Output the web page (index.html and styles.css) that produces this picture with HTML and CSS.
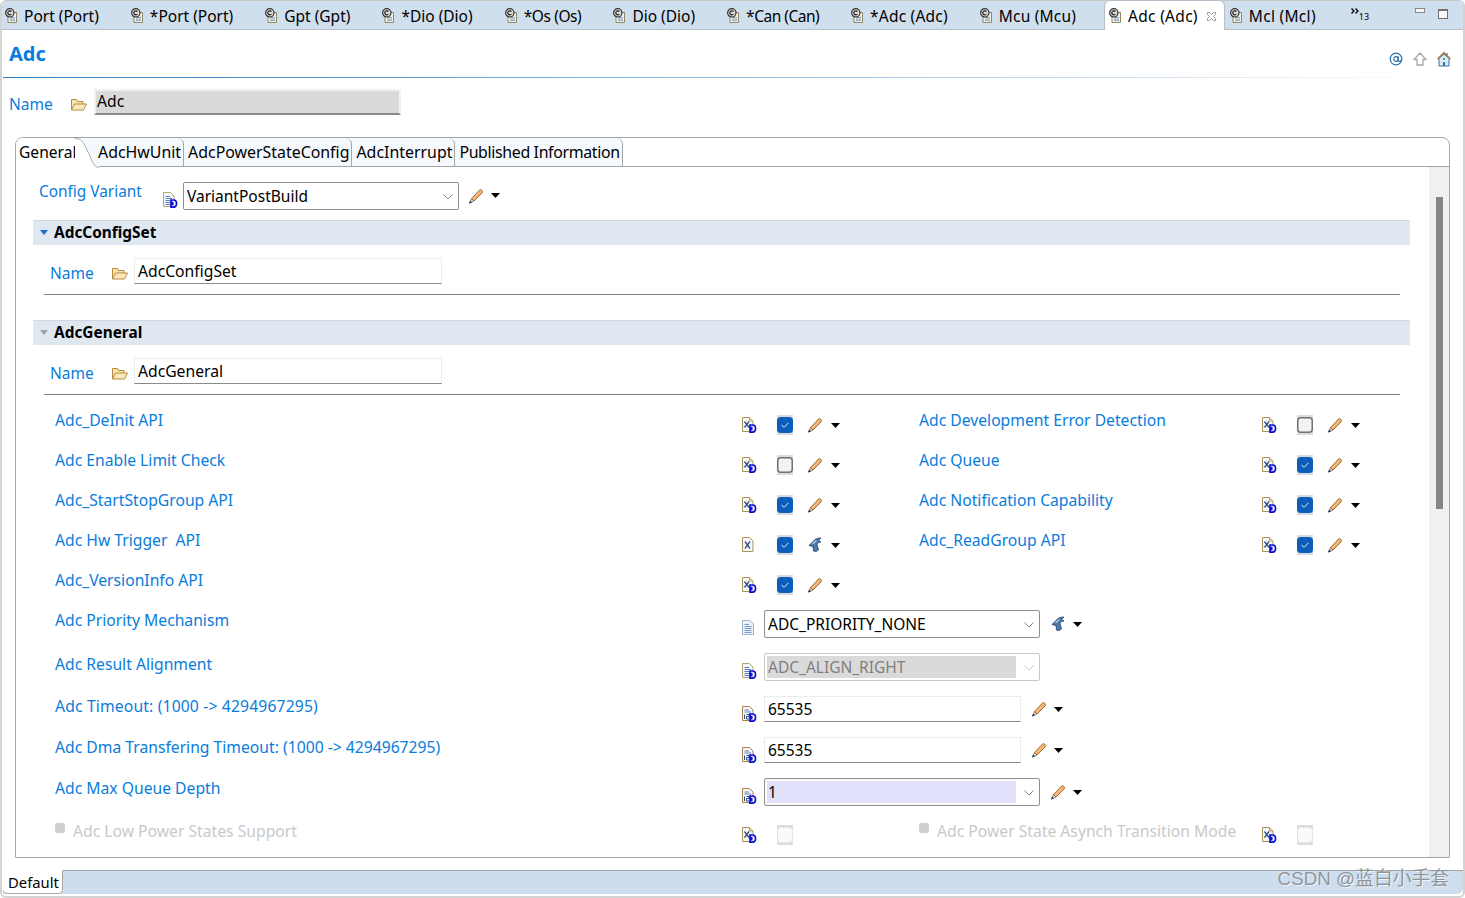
FILE: index.html
```html
<!DOCTYPE html>
<html lang="en">
<head>
<meta charset="utf-8">
<title>Adc</title>
<link rel="stylesheet" href="styles.css">
</head>
<body>
<svg class="defs" width="0" height="0" aria-hidden="true">
  <defs>
    <symbol id="i-editor" viewBox="0 0 16 16">
      <path d="M4 4.5H12.5V14.5H4Z" fill="#f3f1e4" stroke="#8d8766"/>
      <path d="M6 9.5H11M6 11H11M6 12.5H11" stroke="#8ea6c8"/>
      <circle cx="5.8" cy="4.8" r="4.2" fill="#dcdcdc" stroke="#333" stroke-width="1.2"/>
      <path d="M7.4 3.6A2 2 0 1 0 7.4 6" fill="none" stroke="#222" stroke-width="1.2"/>
    </symbol>
    <symbol id="i-folder" viewBox="0 0 16 16">
      <path d="M.5 14V3.500H5.500L6.500 5.500H12V8" fill="#f7e3b0" stroke="#b98a3e"/>
      <path d="M.5 14L3.500 8H15.500L12.500 14Z" fill="#fbe9bd" stroke="#b98a3e"/>
    </symbol>
    <symbol id="i-xd" viewBox="0 0 16 16">
      <path d="M1.5 .5H8.5L12 4V14.5H1.5Z" fill="#f6f6fa" stroke="#a8935c"/>
      <path d="M8.5 .5V4H12" fill="#f3e2b6" stroke="#c29a45"/>
      <path d="M3.5 4.5L8 10.5M8 4.5L3.5 10.5" stroke="#2f4f86" stroke-width="1.3"/>
      <path d="M9 8H11.500C15.500 8 15.500 15.200 11.500 15.200H9ZM10.700 9.800V13.500" fill="#fff" stroke="#0b0bd6" stroke-width="1.7"/>
    </symbol>
    <symbol id="i-x" viewBox="0 0 16 16">
      <path d="M1.5 .5H8.5L12 4V14.5H1.5Z" fill="#f6f6fa" stroke="#a8935c"/>
      <path d="M4 4.5L9 11.5M9 4.5L4 11.5" stroke="#2f4f86" stroke-width="1.3"/>
    </symbol>
    <symbol id="i-d" viewBox="0 0 16 16">
      <path d="M1.5 .5H8.5L12 4V14.5H1.5Z" fill="#f3f6fc" stroke="#b3a571"/>
      <path d="M3.5 4.5H8M3.5 6.5H10M3.5 8.5H8M3.5 10.5H8M3.5 12.5H8" stroke="#5e7fc0"/>
      <path d="M9 8H11.500C15.500 8 15.500 15.200 11.500 15.200H9ZM10.700 9.800V13.500" fill="#fff" stroke="#0b0bd6" stroke-width="1.7"/>
    </symbol>
    <symbol id="i-plain" viewBox="0 0 16 16">
      <path d="M1.5 .5H9L12.5 4V14.5H1.5Z" fill="#edf2fa" stroke="#9fb2d2"/>
      <path d="M3.5 4.5H8M3.5 6.5H10.5M3.5 8.5H10.5M3.5 10.5H10.5M3.5 12.5H10.5" stroke="#7f9ac8"/>
    </symbol>
    <symbol id="i-nd" viewBox="0 0 16 16">
      <path d="M1.5 .5H8.5L12 4V14.5H1.5Z" fill="#f6f6fa" stroke="#a8824a"/>
      <path d="M3.5 4H8M3.5 6H10" stroke="#5e7fc0"/>
      <path d="M3.5 8.5V13M5.5 8.5H8V10.5H5.5V13H8" fill="none" stroke="#2f4f86"/>
      <path d="M9 8H11.500C15.500 8 15.500 15.200 11.500 15.200H9ZM10.700 9.800V13.500" fill="#fff" stroke="#0b0bd6" stroke-width="1.7"/>
    </symbol>
    <symbol id="i-pencil" viewBox="0 0 16 16">
      <path d="M3.500 10.500L11.500 2Q12.500 1 14 2.500Q15 4 14 5L6 13Z" fill="#f0b67c" stroke="#a86f30"/>
      <path d="M3.500 10.500L6 13L1.500 15Z" fill="#efdcb8" stroke="#6d5733" stroke-width=".7"/>
      <path d="M1 15.500L2 12.800L4 14.500Z" fill="#12307f"/>
    </symbol>
    <symbol id="i-wand" viewBox="0 0 16 16">
      <path d="M14 1C10 1 8 2 6.500 4L2 8.500L6 9.500L6.500 14C9 15 11 14 11.500 12.500L10 8C10 6 12 5 14 5L11.500 3.500Z" fill="#4d78a8" stroke="#1f3f68" stroke-width=".8"/>
      <path d="M5.500 7L9.500 3.500" stroke="#bcd4ee" stroke-width="1.200"/>
    </symbol>
    <symbol id="i-arrow" viewBox="0 0 9 5">
      <path d="M0 0H9L4.500 5Z" fill="#000"/>
    </symbol>
    <symbol id="i-chev" viewBox="0 0 10 6">
      <path d="M.5 .5L5 5L9.500 .5" fill="none" stroke="currentColor"/>
    </symbol>
    <symbol id="i-doc-check" viewBox="0 0 16 20">
      <rect width="16" height="20" fill="#dcdcdc"/>
      <rect y="2" width="16" height="16" rx="3.500" fill="#0b5fbb"/>
      <path d="M4.500 10L7 12.500L11.500 7.800" fill="none" stroke="#d8e6f6" stroke-width="1"/>
    </symbol>
    <symbol id="i-doc-off" viewBox="0 0 16 20">
      <rect width="16" height="20" fill="#dcdcdc"/>
      <rect x=".75" y="2.750" width="14.500" height="14.500" rx="3" fill="#f3f3f3" stroke="#707070" stroke-width="1.500"/>
    </symbol>
    <symbol id="i-doc-dis" viewBox="0 0 16 20">
      <rect width="16" height="20" fill="#dcdcdc"/>
      <rect x=".5" y="2.500" width="15" height="15" rx="3" fill="#fafafa" stroke="#e4e4e4"/>
    </symbol>
  </defs>
</svg>

<div class="app">
  <nav class="tabbar">
    <div class="tab"><svg class="ic"><use href="#i-editor"/></svg><span>Port (Port)</span></div>
    <div class="tab"><svg class="ic"><use href="#i-editor"/></svg><span>*Port (Port)</span></div>
    <div class="tab"><svg class="ic"><use href="#i-editor"/></svg><span>Gpt (Gpt)</span></div>
    <div class="tab"><svg class="ic"><use href="#i-editor"/></svg><span>*Dio (Dio)</span></div>
    <div class="tab"><svg class="ic"><use href="#i-editor"/></svg><span class="tight-os">*Os (Os)</span></div>
    <div class="tab"><svg class="ic"><use href="#i-editor"/></svg><span>Dio (Dio)</span></div>
    <div class="tab"><svg class="ic"><use href="#i-editor"/></svg><span class="tight-can">*Can (Can)</span></div>
    <div class="tab"><svg class="ic"><use href="#i-editor"/></svg><span class="wide-adc">*Adc (Adc)</span></div>
    <div class="tab tab-before-active"><svg class="ic"><use href="#i-editor"/></svg><span class="wide-adc">Mcu (Mcu)</span></div>
    <div class="tab tab-active"><svg class="ic"><use href="#i-editor"/></svg><span class="wider">Adc (Adc)</span>
      <svg class="close" viewBox="0 0 11 11"><path d="M1.500 1.500H3.500L5.500 3.500L7.500 1.500H9.500V3.500L7.500 5.500L9.500 7.500V9.500H7.500L5.500 7.500L3.500 9.500H1.500V7.500L3.500 5.500L1.500 3.500Z" fill="#fff" stroke="#9a9a9a"/></svg>
    </div>
    <div class="tab tab-last"><svg class="ic"><use href="#i-editor"/></svg><span class="wider">Mcl (Mcl)</span></div>
    <div class="more"><svg class="more-ic" viewBox="0 0 9 6"><path d="M.5 .5L3 3L.5 5.500M4.500 .5L7 3L4.500 5.500" fill="none" stroke="#000" stroke-width="1.300"/></svg><span class="more-n">13</span></div>
    <div class="winbtns">
      <span class="btn-min"></span>
      <span class="btn-max"></span>
    </div>
  </nav>

  <header class="head">
    <h1 class="title">Adc</h1>
    <div class="head-tools">
      <svg class="tool" viewBox="0 0 14 16"><circle cx="7" cy="8" r="5.800" fill="none" stroke="#2a70aa" stroke-width="1.200"/><circle cx="7" cy="8" r="2.300" fill="none" stroke="#2a70aa" stroke-width="1.200"/><path d="M9.300 5.500V9.500C9.300 11 12 11 12.800 8.500" fill="none" stroke="#2a70aa" stroke-width="1.200"/></svg>
      <svg class="tool tool-up" viewBox="0 0 14 16"><path d="M7 2L13 8.500H10V14H4V8.500H1Z" fill="#fff" stroke="#a8a8a8" stroke-width="1.300"/></svg>
      <svg class="tool tool-home" viewBox="0 0 14 16"><path d="M.5 8L7 1.500L13.500 8" fill="none" stroke="#b5803e" stroke-width="1.400"/><path d="M10 2V5" stroke="#b5803e" stroke-width="1.500"/><path d="M2 7.500L7 3L12 7.500V15H2Z" fill="#dcebf8" stroke="#3f6ea6"/><rect x="6" y="7" width="2" height="2" fill="#58a24a"/><rect x="6" y="11" width="2" height="4" fill="#2f6fb0"/></svg>
    </div>
  </header>

  <div class="namebar">
    <span class="link name-label">Name</span>
    <svg class="ic folder"><use href="#i-folder"/></svg>
    <div class="text-field text-field-ro">Adc</div>
  </div>

  <section class="folder">
    <div class="strip">
      <div class="ftab ftab-active">General</div>
      <svg class="ftab-curve" viewBox="0 0 24 30"><path d="M0 0C8 0 9 6 13 14C17 22 18 29 24 29V30H0Z" fill="#fff"/><path d="M0 .5C8 .5 9 6 13 14C17 22 18 29 24 29.500" fill="none" stroke="#a8a8a8"/></svg>
      <div class="ftab ftab-first">AdcHwUnit</div>
      <div class="ftab">AdcPowerStateConfig</div>
      <div class="ftab">AdcInterrupt</div>
      <div class="ftab ftab-tight">Published Information</div>
    </div>

    <div class="folder-body">
      <div class="content">
        <div class="variant-row">
          <span class="link variant-label">Config Variant</span>
          <svg class="ic variant-ic"><use href="#i-d"/></svg>
          <div class="combo combo-variant"><span class="combo-text">VariantPostBuild</span><svg class="chev"><use href="#i-chev"/></svg></div>
          <svg class="ic pencil"><use href="#i-pencil"/></svg>
          <svg class="arrow"><use href="#i-arrow"/></svg>
        </div>

        <div class="section">
          <div class="section-head"><span class="twist"></span>AdcConfigSet</div>
          <div class="section-name">
            <span class="link sec-label">Name</span>
            <svg class="ic folder"><use href="#i-folder"/></svg>
            <div class="text-field text-field-sec">AdcConfigSet</div>
          </div>
        </div>

        <div class="section section-second">
          <div class="section-head"><span class="twist twist-gray"></span>AdcGeneral</div>
          <div class="section-name">
            <span class="link sec-label">Name</span>
            <svg class="ic folder"><use href="#i-folder"/></svg>
            <div class="text-field text-field-sec">AdcGeneral</div>
          </div>
        </div>

        <div class="params">
          <div class="row">
            <div class="half half-left"><span class="link plabel">Adc_DeInit API</span><svg class="ic"><use href="#i-xd"/></svg><svg class="cb"><use href="#i-doc-check"/></svg><svg class="ic pencil"><use href="#i-pencil"/></svg><svg class="arrow"><use href="#i-arrow"/></svg></div>
            <div class="half"><span class="link plabel plabel-r">Adc Development Error Detection</span><svg class="ic"><use href="#i-xd"/></svg><svg class="cb"><use href="#i-doc-off"/></svg><svg class="ic pencil"><use href="#i-pencil"/></svg><svg class="arrow"><use href="#i-arrow"/></svg></div>
          </div>
          <div class="row">
            <div class="half half-left"><span class="link plabel">Adc Enable Limit Check</span><svg class="ic"><use href="#i-xd"/></svg><svg class="cb"><use href="#i-doc-off"/></svg><svg class="ic pencil"><use href="#i-pencil"/></svg><svg class="arrow"><use href="#i-arrow"/></svg></div>
            <div class="half"><span class="link plabel plabel-r">Adc Queue</span><svg class="ic"><use href="#i-xd"/></svg><svg class="cb"><use href="#i-doc-check"/></svg><svg class="ic pencil"><use href="#i-pencil"/></svg><svg class="arrow"><use href="#i-arrow"/></svg></div>
          </div>
          <div class="row">
            <div class="half half-left"><span class="link plabel">Adc_StartStopGroup API</span><svg class="ic"><use href="#i-xd"/></svg><svg class="cb"><use href="#i-doc-check"/></svg><svg class="ic pencil"><use href="#i-pencil"/></svg><svg class="arrow"><use href="#i-arrow"/></svg></div>
            <div class="half"><span class="link plabel plabel-r">Adc Notification Capability</span><svg class="ic"><use href="#i-xd"/></svg><svg class="cb"><use href="#i-doc-check"/></svg><svg class="ic pencil"><use href="#i-pencil"/></svg><svg class="arrow"><use href="#i-arrow"/></svg></div>
          </div>
          <div class="row">
            <div class="half half-left"><span class="link plabel">Adc Hw Trigger&nbsp; API</span><svg class="ic"><use href="#i-x"/></svg><svg class="cb"><use href="#i-doc-check"/></svg><svg class="ic pencil"><use href="#i-wand"/></svg><svg class="arrow"><use href="#i-arrow"/></svg></div>
            <div class="half"><span class="link plabel plabel-r">Adc_ReadGroup API</span><svg class="ic"><use href="#i-xd"/></svg><svg class="cb"><use href="#i-doc-check"/></svg><svg class="ic pencil"><use href="#i-pencil"/></svg><svg class="arrow"><use href="#i-arrow"/></svg></div>
          </div>
          <div class="row">
            <div class="half half-left"><span class="link plabel">Adc_VersionInfo API</span><svg class="ic"><use href="#i-xd"/></svg><svg class="cb"><use href="#i-doc-check"/></svg><svg class="ic pencil"><use href="#i-pencil"/></svg><svg class="arrow"><use href="#i-arrow"/></svg></div>
          </div>

          <div class="fields">
            <div class="frow">
              <span class="link flabel">Adc Priority Mechanism</span>
              <svg class="ic fic"><use href="#i-plain"/></svg>
              <div class="combo combo-f"><span class="combo-text">ADC_PRIORITY_NONE</span><svg class="chev"><use href="#i-chev"/></svg></div>
              <svg class="ic pencil-f"><use href="#i-wand"/></svg>
              <svg class="arrow arrow-f"><use href="#i-arrow"/></svg>
            </div>
            <div class="frow">
              <span class="link flabel flabel-low">Adc Result Alignment</span>
              <svg class="ic fic"><use href="#i-d"/></svg>
              <div class="combo combo-f combo-off"><span class="combo-text combo-hl-off">ADC_ALIGN_RIGHT</span><svg class="chev"><use href="#i-chev"/></svg></div>
            </div>
            <div class="frow">
              <span class="link flabel flabel-wide">Adc Timeout: (1000 -&gt; 4294967295)</span>
              <svg class="ic fic"><use href="#i-nd"/></svg>
              <div class="text-field text-field-f">65535</div>
              <svg class="ic pencil-f"><use href="#i-pencil"/></svg>
              <svg class="arrow arrow-f"><use href="#i-arrow"/></svg>
            </div>
            <div class="frow">
              <span class="link flabel">Adc Dma Transfering Timeout: (1000 -&gt; 4294967295)</span>
              <svg class="ic fic"><use href="#i-nd"/></svg>
              <div class="text-field text-field-f">65535</div>
              <svg class="ic pencil-f"><use href="#i-pencil"/></svg>
              <svg class="arrow arrow-f"><use href="#i-arrow"/></svg>
            </div>
            <div class="frow">
              <span class="link flabel">Adc Max Queue Depth</span>
              <svg class="ic fic"><use href="#i-nd"/></svg>
              <div class="combo combo-f"><span class="combo-text combo-hl">1</span><svg class="chev"><use href="#i-chev"/></svg></div>
              <svg class="ic pencil-f"><use href="#i-pencil"/></svg>
              <svg class="arrow arrow-f"><use href="#i-arrow"/></svg>
            </div>
          </div>

          <div class="row row-disabled">
            <div class="half half-left"><span class="bullet"></span><span class="plabel plabel-dis">Adc Low Power States Support</span><svg class="ic"><use href="#i-xd"/></svg><svg class="cb"><use href="#i-doc-dis"/></svg></div>
            <div class="half"><span class="bullet"></span><span class="plabel plabel-dis plabel-dis-r">Adc Power State Asynch Transition Mode</span><svg class="ic"><use href="#i-xd"/></svg><svg class="cb"><use href="#i-doc-dis"/></svg></div>
          </div>
        </div>
      </div>
      <div class="scrollbar"><div class="thumb"></div></div>
    </div>
  </section>

  <footer class="bottombar">
    <div class="bottom-tab">Default</div>
  </footer>
  <div class="watermark">CSDN @蓝白小手套</div>
</div>
</body>
</html>
```

FILE: styles.css
```css
* { box-sizing: border-box; }
html, body { margin: 0; padding: 0; }
body {
  width: 1465px;
  height: 898px;
  overflow: hidden;
  background: #fff;
  font-family: "Noto Sans", "Noto Sans CJK SC", sans-serif;
  font-size: 15.7px;
  color: #000;
}
.defs { position: absolute; }
.app {
  position: relative;
  width: 1465px;
  height: 898px;
  display: flex;
  flex-direction: column;
  border-left: 2px solid #d3d3d3;
  border-right: 2px solid #d3d3d3;
  border-bottom: 2px solid #d3d3d3;
  border-radius: 6px;
  overflow: hidden;
  background: #fff;
}
svg { display: block; flex: none; }
.ic { width: 16px; height: 16px; }
.link { color: #0a7cdb; }

/* top editor tabs */
.tabbar {
  height: 30px;
  flex: none;
  display: flex;
  align-items: stretch;
  background: #d0dfee;
  border-top: 1px solid #c8c8c8;
  border-bottom: 1px solid #b7bdc8;
  padding-left: 2px;
  font-size: 15.5px;
}
.tab {
  display: flex;
  align-items: center;
  gap: 4px;
  margin-right: 31px;
  padding-top: 1px;
  white-space: nowrap;
}
.tight-os { letter-spacing: -.4px; }
.tight-can { letter-spacing: -.5px; }
.wide-adc { letter-spacing: .2px; }
.wider { letter-spacing: .3px; }
.tab-before-active { margin-right: 28px; }
.tab-active {
  background: #fff;
  margin: -1px 4px -1px 0;
  padding: 1px 7px 0 3px;
  border: 1px solid #b7bdc8;
  border-bottom: 0;
  border-radius: 6px 6px 0 0;
}
.tab-last { margin-right: 35px; }
.close { width: 11px; height: 11px; margin-left: 4px; }
.more { position: relative; width: 64px; }
.more-ic { width: 9px; height: 6px; margin-top: 7px; }
.more-n {
  position: absolute;
  left: 8px;
  top: 10px;
  font-size: 9px;
  line-height: 11px;
}
.winbtns { display: flex; gap: 13px; padding-top: 7px; }
.btn-min { width: 10px; height: 5px; border: 1px solid #8a8a8a; background: #f4f4f4; }
.btn-max { width: 10px; height: 10px; border: 1px solid #707070; border-top-width: 2px; background: #f8f8f8; margin-top: 1px; }

/* form head */
.head {
  height: 48px;
  flex: none;
  display: flex;
  justify-content: space-between;
  padding: 0 12px 0 7px;
  border-bottom: 1px solid transparent;
  border-image: linear-gradient(to right, #2a7fc4 0, #a9c9e4 60%, #fff 98%) 1;
  margin-left: 1px;
}
.title {
  margin: 9px 0 0 -1px;
  font-size: 20px;
  line-height: 30px;
  font-weight: 700;
  color: #0a7cdb;
}
.head-tools { display: flex; gap: 10px; padding-top: 21px; }
.tool { width: 14px; height: 16px; }
.namebar {
  display: flex;
  align-items: flex-start;
  margin: 11px 0 0 7px;
  height: 26px;
  flex: none;
}
.name-label { width: 62px; line-height: 30px; font-size: 15.5px; }
.folder { margin-top: 7px; }
.text-field {
  background: #fff;
  border: 1px solid #ececec;
  border-bottom: 1px solid #8a8a8a;
  padding-left: 3px;
  line-height: 24px;
  white-space: nowrap;
}
.text-field-ro {
  width: 307px;
  height: 26px;
  margin-left: 7px;
  background: #dadada;
  border: 2px solid #f1f1f1;
  border-bottom: 2px solid #8a8a8a;
  padding-left: 1px;
  line-height: 20px;
}

/* main folder */
section.folder {
  flex: none;
  width: 1435px;
  height: 721px;
  margin: 22px 0 0 13px;
  display: flex;
  flex-direction: column;
  border: 1px solid #a6a6a6;
  border-radius: 8px 8px 0 0;
  overflow: hidden;
}
.strip {
  height: 29px;
  flex: none;
  display: flex;
  border-bottom: 1px solid #a6a6a6;
  font-size: 15.9px;
}
.ftab {
  flex: none;
  padding: 0 2px 0 4px;
  line-height: 28px;
  background: #f5f9fd;
  border-right: 1px solid #a6a6a6;
  border-radius: 0 6px 0 0;
  white-space: nowrap;
}
.ftab-active {
  width: 59px;
  height: 29px;
  padding-left: 3px;
  font-size: 15.6px;
  background: #fff;
  border: 0;
  border-radius: 0;
}
.ftab-curve {
  width: 24px;
  height: 30px;
  background: #f5f9fd;
}
.ftab-first { padding-left: 0; margin-left: -1px; }
.ftab-tight { letter-spacing: -.35px; }

.folder-body { flex: 1; display: flex; min-height: 0; }
.content { flex: 1; min-width: 0; overflow: hidden; }
.scrollbar { flex: none; width: 20px; background: #f0f0f0; padding: 30px 0 0 7px; }
.thumb { width: 7px; height: 312px; background: #858585; }

.variant-row { display: flex; align-items: flex-start; padding: 15px 0 0 23px; height: 53px; }
.variant-label { width: 123px; line-height: 20px; font-size: 15.4px; }
.variant-ic { margin-top: 10px; }
.combo {
  display: flex;
  align-items: center;
  justify-content: space-between;
  background: #fff;
  border: 1px solid #8e8e8e;
  border-radius: 2px;
  padding: 0 5px 0 2px;
  color: #000;
  white-space: nowrap;
  font-size: 15.5px;
}
.combo-variant { width: 276px; height: 28px; margin-left: 5px; }
.combo-text { padding-left: 1px; line-height: 22px; }
.chev { width: 10px; height: 6px; color: #8a8a8a; margin-top: 1px; }
.variant-row .pencil { margin: 6px 0 0 9px; }
.variant-row .arrow { margin: 11px 0 0 7px; }
.arrow { width: 9px; height: 5px; }

.section { margin: 0 0 0 17px; width: 1377px; }
.section-second { margin-top: 25px; }
.section-head {
  height: 25px;
  display: flex;
  align-items: center;
  background: #dfe7f1;
  border-top: 1px solid #ced8e5;
  border-left: 1px solid #e6ebf1;
  font-size: 15.4px;
  font-weight: 700;
  line-height: 22px;
  padding: 0 0 1px 6px;
}
.twist {
  width: 0;
  height: 0;
  border-left: 4.5px solid transparent;
  border-right: 4.5px solid transparent;
  border-top: 5px solid #1c6fc6;
  margin-right: 6px;
}
.twist-gray { border-top-color: #a3a3a3; }
.section-name {
  display: flex;
  align-items: flex-start;
  height: 50px;
  margin: 0 10px 0 11px;
  padding: 13px 0 0 6px;
  border-bottom: 1px solid #808080;
}
.sec-label { width: 62px; line-height: 30px; font-size: 15.5px; }
.section-name .folder { margin-top: 7px; }
.text-field-sec { width: 308px; height: 26px; margin-left: 6px; }

/* parameters */
.params { padding: 10px 0 0 39px; }
.row { display: flex; height: 40px; align-items: stretch; }
.half { display: flex; align-items: center; }
.half-left { width: 864px; }
.plabel { width: 686px; align-self: flex-start; line-height: 30px; white-space: nowrap; }
.plabel-r { width: 342px; }
.cb { width: 16px; height: 20px; margin: 0 14px 0 20px; }
.half > .arrow { margin-left: 8px; }
.fields { display: flex; flex-direction: column; gap: 15px; margin-top: 5px; }
.frow { display: flex; align-items: flex-start; }
.flabel { width: 686px; line-height: 20px; white-space: nowrap; }
.flabel-low { padding-top: 1px; }
.flabel-wide { letter-spacing: .15px; }
.fic { margin-top: 10px; }
.combo-f { width: 276px; height: 28px; margin-left: 7px; }
.combo-off { border-color: #c8c8c8; color: #7f7f7f; }
.combo-off .chev { color: #c8c8c8; }
.combo-hl, .combo-hl-off { width: 249px; height: 22px; }
.combo-hl { background: #e0e0fa; }
.combo-hl-off { background: #dadada; }
.text-field-f { width: 257px; height: 26px; margin-left: 7px; font-size: 15.5px; }
.pencil-f { margin: 5px 0 0 10px; }
.arrow-f { margin: 11px 0 0 7px; }
.combo-f ~ .pencil-f { margin-top: 6px; }
.combo-f ~ .arrow-f { margin-top: 12px; }
.row-disabled { margin-top: 19px; height: 20px; }
.row-disabled .half { position: relative; }
.bullet {
  position: absolute;
  left: 0;
  top: -2px;
  width: 10px;
  height: 10px;
  border-radius: 2px;
  background: #cfcfcf;
}
.plabel-dis { width: 686px; padding-left: 18px; color: #c9c9c9; line-height: 12px; }
.plabel-dis-r { width: 342px; }

/* bottom page tabs */
.bottombar {
  flex: none;
  height: 24px;
  margin: 12px 0 0 1px;
  background: #cedded;
  border-top: 1px solid #a6a6a6;
  border-bottom-right-radius: 6px;
}
.bottom-tab {
  width: 60px;
  height: 24px;
  margin-top: -1px;
  background: #fff;
  border-right: 1px solid #a6a6a6;
  border-top: 1px solid #fff;
  border-bottom: 1px solid #a6a6a6;
  border-radius: 0 0 5px 5px;
  line-height: 22px;
  padding-left: 5px;
  font-size: 14.8px;
}
.watermark {
  position: absolute;
  right: 14px;
  bottom: 5px;
  font-family: "Liberation Sans", "Noto Sans CJK SC", sans-serif;
  font-size: 18.8px;
  line-height: 24px;
  color: #8f969c;
  text-shadow: 1px 1px 0 rgba(255,255,255,.7);
  white-space: nowrap;
}
```
